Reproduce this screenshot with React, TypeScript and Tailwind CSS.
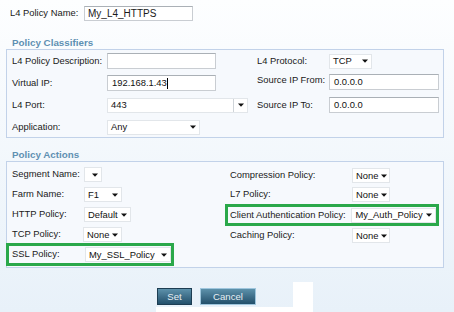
import React from "react";

const Arrow = () => (
  <svg width="6" height="4" viewBox="0 0 6 4" className="shrink-0 ml-[3px]">
    <path d="M0 0.5 L6 0.5 L3 3.8 Z" fill="#111" />
  </svg>
);

function Sel({ w, value, sep }: { w: string; value: string; sep?: boolean }) {
  return (
    <div
      className={`${w} h-[15px] bg-white border border-[#e2e6ea] flex items-center justify-between pl-[3px] pr-[3px] text-[#111]`}
    >
      <span className="leading-none whitespace-nowrap">{value}</span>
      {sep ? (
        <span className="h-full border-l border-[#cfd4d9] flex items-center pl-[1px]">
          <Arrow />
        </span>
      ) : (
        <Arrow />
      )}
    </div>
  );
}

function Inp({ w, value, cursor }: { w: string; value?: string; cursor?: boolean }) {
  return (
    <div
      className={`${w} h-[16px] bg-white border border-[#c9cdd2] border-t-[#aab0b6] flex items-center pl-[4px] text-[#111]`}
    >
      <span className="leading-none whitespace-nowrap">{value}</span>
      {cursor && <span className="w-px h-[11px] bg-black" />}
    </div>
  );
}

function Row({ children }: { children: React.ReactNode }) {
  return <div className="flex items-center h-[16px]">{children}</div>;
}

export default function App() {
  return (
    <div
      className="relative w-[454px] h-[312px] overflow-hidden bg-gradient-to-b from-[#fdfeff] to-[#e8f1f9] text-[9.4px] text-[#1a1a1a]"
      style={{ fontFamily: '"Liberation Sans", Arial, sans-serif' }}
    >
      {/* Top row */}
      <div className="flex items-center h-[15px] mt-[6px] pl-[10px]">
        <span className="w-[74px]">L4 Policy Name:</span>
        <div className="w-[109px] h-[15px] bg-white border border-[#c9cdd2] border-t-[#aab0b6] flex items-center pl-[3px] text-[10px]">
          My_L4_HTTPS
        </div>
      </div>

      {/* Policy Classifiers */}
      <div className="mt-[16px] h-[12px] leading-[12px] pl-[12px] font-bold text-[#5f90b2] text-[9.8px]">
        Policy Classifiers
      </div>
      <div className="ml-[6px] w-[438px] h-[89px] border border-[#c2d2e9] bg-[#f6f9fd] pt-[3px] pl-[5px] flex flex-col gap-[6px]">
        <Row>
          <span className="w-[95px]">L4 Policy Description:</span>
          <div className="w-[150px]"><Inp w="w-[109px]" /></div>
          <span className="w-[72px]">L4 Protocol:</span>
          <Sel w="w-[43px]" value="TCP" />
        </Row>
        <Row>
          <span className="w-[95px]">Virtual IP:</span>
          <div className="w-[150px]"><Inp w="w-[109px]" value="192.168.1.43" cursor /></div>
          <span className="w-[72px] -mt-[5px]">Source IP From:</span>
          <div className="-mt-[3px]"><Inp w="w-[110px]" value="0.0.0.0" /></div>
        </Row>
        <Row>
          <span className="w-[95px]">L4 Port:</span>
          <div className="w-[150px]"><Sel w="w-[141px]" value="443" sep /></div>
          <span className="w-[72px]">Source IP To:</span>
          <Inp w="w-[110px]" value="0.0.0.0" />
        </Row>
        <Row>
          <span className="w-[95px]">Application:</span>
          <Sel w="w-[93px]" value="Any" />
        </Row>
      </div>

      {/* Policy Actions */}
      <div className="mt-[11px] h-[12px] leading-[12px] pl-[12px] font-bold text-[#5f90b2] text-[9.8px]">
        Policy Actions
      </div>
      <div className="ml-[6px] w-[438px] h-[107px] border border-[#c2d2e9] bg-[#f6f9fd] flex">
        {/* left column */}
        <div className="w-[218px] flex flex-col pt-[5px]">
          <div className="flex flex-col gap-[5px] pl-[5px]">
            <div className="flex items-center h-[15px]">
              <span className="w-[72px]">Segment Name:</span>
              <Sel w="w-[18px]" value="" />
            </div>
            <div className="flex items-center h-[15px]">
              <span className="w-[72px]">Farm Name:</span>
              <Sel w="w-[38px]" value="F1" />
            </div>
            <div className="flex items-center h-[15px]">
              <span className="w-[72px]">HTTP Policy:</span>
              <Sel w="w-[47px]" value="Default" />
            </div>
            <div className="flex items-center h-[15px]">
              <span className="w-[71px]">TCP Policy:</span>
              <Sel w="w-[39px]" value="None" />
            </div>
          </div>
          <div className="mt-[1px] -ml-px w-[168px] h-[23px] border-[3px] border-[#2aa84a] flex items-center pl-[3px]">
            <span className="w-[73px]">SSL Policy:</span>
            <Sel w="w-[86px]" value="My_SSL_Policy" />
          </div>
        </div>
        {/* right column */}
        <div className="flex flex-col pt-[6px]">
          <div className="flex items-center h-[15px] pl-[5px]">
            <span className="w-[122px]">Compression Policy:</span>
            <Sel w="w-[38px]" value="None" />
          </div>
          <div className="flex items-center h-[15px] pl-[5px] mt-[4px]">
            <span className="w-[122px]">L7 Policy:</span>
            <Sel w="w-[38px]" value="None" />
          </div>
          <div className="mt-[2px] w-[214px] h-[22px] border-[3px] border-[#2aa84a] flex items-center pl-[2px]">
            <span className="w-[122px] whitespace-nowrap">Client Authentication Policy:</span>
            <Sel w="w-[85px]" value="My_Auth_Policy" />
          </div>
          <div className="flex items-center h-[15px] pl-[5px] mt-[2px]">
            <span className="w-[122px]">Caching Policy:</span>
            <Sel w="w-[38px]" value="None" />
          </div>
        </div>
      </div>

      {/* Buttons */}
      <div className="flex gap-[8px] mt-[20px] ml-[157px]">
        <button className="w-[35px] h-[17px] border border-[#1d3d52] bg-gradient-to-b from-[#5d91ab] to-[#23506b] text-[#e8f0f5] text-[9.6px] leading-none">
          Set
        </button>
        <button className="w-[56px] h-[17px] border border-[#9fc6dd] bg-gradient-to-b from-[#5d91ab] to-[#23506b] text-[#e8f0f5] text-[9.6px] leading-none">
          Cancel
        </button>
      </div>

      {/* white artifact overlay */}
      <div className="absolute left-[293px] top-[282px] w-[20px] h-[30px] bg-white" />
      <div className="absolute left-[156px] top-[307px] w-[157px] h-[5px] bg-white" />
    </div>
  );
}
